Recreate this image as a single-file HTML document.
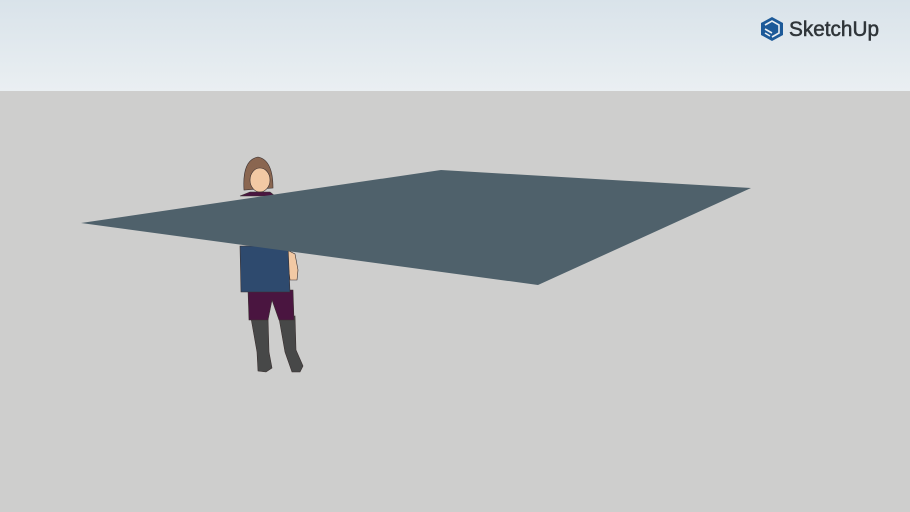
<!DOCTYPE html>
<html><head><meta charset="utf-8"><style>
html,body{margin:0;padding:0;width:910px;height:512px;overflow:hidden;background:#cececd}
svg{display:block}
</style></head><body>
<svg width="910" height="512" viewBox="0 0 910 512" xmlns="http://www.w3.org/2000/svg">
<defs><linearGradient id="sky" x1="0" y1="0" x2="0" y2="1">
<stop offset="0" stop-color="#d9e3ea"/><stop offset="1" stop-color="#eaeff2"/></linearGradient></defs>
<rect x="0" y="0" width="910" height="91" fill="url(#sky)"/>
<rect x="0" y="91" width="910" height="421" fill="#cececd"/>
<g stroke="#3a3030" stroke-width="0.6">
<path d="M251 318 L268 318 L269 352 L272 368 L266 372 L258 371 L257 352 Z" fill="#474848"/>
<path d="M279 318 L295 316 L296 350 L303 366 L300 372 L292 372 L285 352 Z" fill="#474848"/>
<path d="M248 290 L293 290 L294 320 L279 320 L272 300 L268 320 L249 320 Z" fill="#4a1540"/>
<path d="M287 250 L295 254 L298 270 L297 280 L290 280 L288 264 Z" fill="#f2c9a4"/>
<path d="M240 246 L288 246 L290 292 L241 292 Z" fill="#2e4a6e"/>
<path d="M244 190 Q242 160 258 157 Q273 160 273 188 Z" fill="#8a6650"/>
<ellipse cx="260" cy="180" rx="10" ry="12" fill="#f2c9a4"/>
<path d="M250 192 L270 192 L275 196 L240 196 Z" fill="#4a1540"/>
</g>
<polygon points="81,223 441,170 751,188 538,285" fill="#4f616b"/>
<g transform="translate(761,17)">
<path d="M11 0 L22 6 L22 18 L11 24 L0 18 L0 6 Z" fill="#1c5a99"/>
<path d="M4 8 L11 4 L18 8 L18 16 L11 20 M4 12 L11 16 M4 16 L9 19" stroke="#eaeff2" stroke-width="1.6" fill="none"/>
</g>
<text x="789" y="36" font-family="Liberation Sans, sans-serif" font-size="21" fill="#2f3539" stroke="#2f3539" stroke-width="0.5" textLength="90" lengthAdjust="spacingAndGlyphs">SketchUp</text>
</svg>
</body></html>
